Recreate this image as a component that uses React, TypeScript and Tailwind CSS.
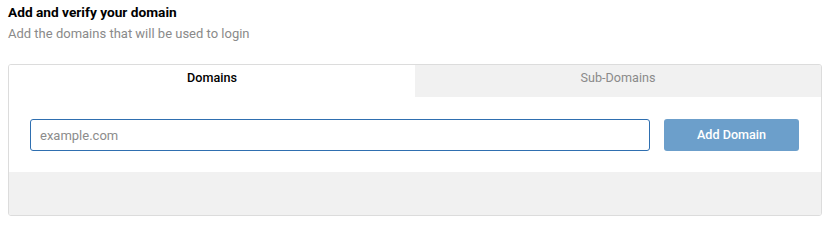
export default function App() {
  return (
    <div className="bg-white px-2 pt-[3px] font-['Roboto','Liberation_Sans',sans-serif]">
      {/* Header */}
      <h2 className="text-[13.7px] leading-[18px] font-bold text-black">Add and verify your domain</h2>
      <p className="mt-[5px] text-[13px] leading-[16px] text-[#8a8a8a]">Add the domains that will be used to login</p>

      {/* Card */}
      <div className="mt-[22px] w-[814px] rounded-[3px] border border-[#dcdcdc] overflow-hidden">
        {/* Tabs */}
        <div className="flex h-[32px]">
          <button className="flex-1 bg-white pt-[4px] text-[12.6px] leading-[18px] font-medium text-black flex justify-center">
            Domains
          </button>
          <button className="flex-1 bg-[#f1f1f1] pt-[4px] text-[12.6px] leading-[18px] text-[#8a8a8a] flex justify-center">
            Sub-Domains
          </button>
        </div>

        {/* Body */}
        <div className="flex gap-[14px] px-[21px] pt-[22px] pb-[21px]">
          <input
            autoFocus
            placeholder="example.com"
            className="h-[32px] w-[620px] rounded-[3px] border border-[#2f6fb0] px-[9px] text-[13px] text-black placeholder:text-[#8c8c8c] outline-none"
          />
          <button className="h-[32px] w-[135px] rounded-[3px] bg-[#6c9fcb] text-[12.6px] font-medium text-white">
            Add Domain
          </button>
        </div>

        {/* Footer */}
        <div className="h-[43px] bg-[#f1f1f1]" />
      </div>
    </div>
  )
}
